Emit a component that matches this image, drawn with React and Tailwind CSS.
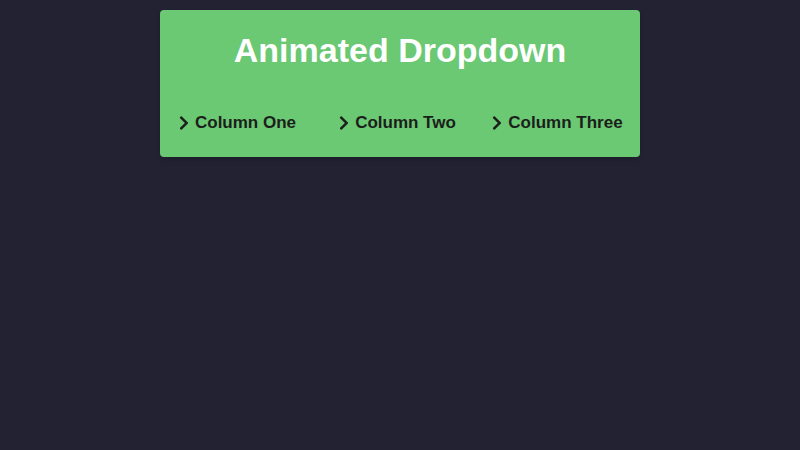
const columns = ["Column One", "Column Two", "Column Three"];

function Chevron() {
  return (
    <svg viewBox="0 0 320 512" className="w-[10px] h-4 fill-current shrink-0">
      <path d="M285.476 272.971L91.132 467.314c-9.373 9.373-24.569 9.373-33.941 0l-22.667-22.667c-9.357-9.357-9.375-24.522-.04-33.901L188.505 256 34.484 101.255c-9.335-9.379-9.317-24.544.04-33.901l22.667-22.667c9.373-9.373 24.569-9.373 33.941 0L285.475 239.03c9.373 9.372 9.373 24.568.001 33.941z" />
    </svg>
  );
}

export default function App() {
  return (
    <div className="min-h-screen bg-[#222232] pt-[10px] font-['Liberation_Sans',Arial,sans-serif]">
      <div className="mx-auto w-[480px] rounded bg-[#6bc873] shadow-md pt-[21px] pb-[22px]">
        <h1 className="text-center text-[34px] leading-[39px] font-bold text-white">
          Animated Dropdown
        </h1>
        <div className="grid grid-cols-3 mt-[41px]">
          {columns.map((name) => (
            <button
              key={name}
              className="flex items-center justify-center gap-[6px] pr-[5px] text-[17px] leading-6 font-bold text-[#1b1f1b]"
            >
              <Chevron />
              {name}
            </button>
          ))}
        </div>
      </div>
    </div>
  );
}
